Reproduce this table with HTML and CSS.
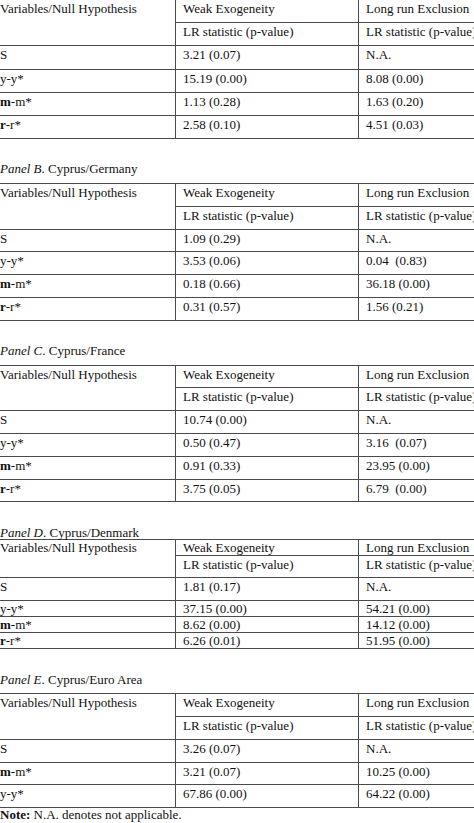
FILE: index.html
```html
<!DOCTYPE html>
<html>
<head>
<meta charset="utf-8">
<link rel="stylesheet" href="styles.css">
</head>
<body>
<div class="page">
  <div class="sheet">
    <table class="tbl tbl-a">
      <colgroup><col class="c"><col class="c"><col class="c"></colgroup>
      <tr><td rowspan="2">Variables/Null Hypothesis</td><td>Weak Exogeneity</td><td>Long run Exclusion</td></tr>
      <tr><td>LR statistic (p-value)</td><td>LR statistic (p-value)</td></tr>
      <tr><td>S</td><td>3.21 (0.07)</td><td>N.A.</td></tr>
      <tr><td>y-y*</td><td>15.19 (0.00)</td><td>8.08 (0.00)</td></tr>
      <tr><td><b>m</b>-m*</td><td>1.13 (0.28)</td><td>1.63 (0.20)</td></tr>
      <tr><td><b>r</b>-r*</td><td>2.58 (0.10)</td><td>4.51 (0.03)</td></tr>
    </table>

    <div class="title"><i>Panel B</i>. Cyprus/Germany</div>
    <table class="tbl">
      <colgroup><col class="c"><col class="c"><col class="c"></colgroup>
      <tr><td rowspan="2">Variables/Null Hypothesis</td><td>Weak Exogeneity</td><td>Long run Exclusion</td></tr>
      <tr><td>LR statistic (p-value)</td><td>LR statistic (p-value)</td></tr>
      <tr><td>S</td><td>1.09 (0.29)</td><td>N.A.</td></tr>
      <tr><td>y-y*</td><td>3.53 (0.06)</td><td>0.04&nbsp; (0.83)</td></tr>
      <tr><td><b>m</b>-m*</td><td>0.18 (0.66)</td><td>36.18 (0.00)</td></tr>
      <tr><td><b>r</b>-r*</td><td>0.31 (0.57)</td><td>1.56 (0.21)</td></tr>
    </table>

    <div class="title"><i>Panel C</i>. Cyprus/France</div>
    <table class="tbl">
      <colgroup><col class="c"><col class="c"><col class="c"></colgroup>
      <tr><td rowspan="2">Variables/Null Hypothesis</td><td>Weak Exogeneity</td><td>Long run Exclusion</td></tr>
      <tr><td>LR statistic (p-value)</td><td>LR statistic (p-value)</td></tr>
      <tr><td>S</td><td>10.74 (0.00)</td><td>N.A.</td></tr>
      <tr><td>y-y*</td><td>0.50 (0.47)</td><td>3.16&nbsp; (0.07)</td></tr>
      <tr><td><b>m</b>-m*</td><td>0.91 (0.33)</td><td>23.95 (0.00)</td></tr>
      <tr><td><b>r</b>-r*</td><td>3.75 (0.05)</td><td>6.79&nbsp; (0.00)</td></tr>
    </table>

    <div class="title title-tight"><i>Panel D</i>. Cyprus/Denmark</div>
    <table class="tbl">
      <colgroup><col class="c"><col class="c"><col class="c"></colgroup>
      <tr class="compact"><td rowspan="2">Variables/Null Hypothesis</td><td>Weak Exogeneity</td><td>Long run Exclusion</td></tr>
      <tr><td>LR statistic (p-value)</td><td>LR statistic (p-value)</td></tr>
      <tr><td>S</td><td>1.81 (0.17)</td><td>N.A.</td></tr>
      <tr class="compact"><td>y-y*</td><td>37.15 (0.00)</td><td>54.21 (0.00)</td></tr>
      <tr class="compact"><td><b>m</b>-m*</td><td>8.62 (0.00)</td><td>14.12 (0.00)</td></tr>
      <tr class="compact"><td><b>r</b>-r*</td><td>6.26 (0.01)</td><td>51.95 (0.00)</td></tr>
    </table>

    <div class="title"><i>Panel E</i>. Cyprus/Euro Area</div>
    <table class="tbl">
      <colgroup><col class="c"><col class="c"><col class="c"></colgroup>
      <tr><td rowspan="2">Variables/Null Hypothesis</td><td>Weak Exogeneity</td><td>Long run Exclusion</td></tr>
      <tr><td>LR statistic (p-value)</td><td>LR statistic (p-value)</td></tr>
      <tr><td>S</td><td>3.26 (0.07)</td><td>N.A.</td></tr>
      <tr><td><b>m</b>-m*</td><td>3.21 (0.07)</td><td>10.25 (0.00)</td></tr>
      <tr><td>y-y*</td><td>67.86 (0.00)</td><td>64.22 (0.00)</td></tr>
    </table>
    <div class="note"><b>Note:</b> N.A. denotes not applicable.</div>
  </div>
</div>
</body>
</html>
```

FILE: styles.css
```css
html, body {
  margin: 0;
  padding: 0;
  background: #ffffff;
}

body {
  font-family: "Liberation Serif", "Times New Roman", serif;
  font-size: 13px;
  color: #111111;
}

.page {
  width: 474px;
  height: 823px;
  overflow: hidden;
}

.sheet {
  margin-left: -8px;
  width: 560px;
}

.tbl {
  border-collapse: collapse;
  table-layout: fixed;
  width: 549px;
}

.tbl .c {
  width: 183px;
}

.tbl td {
  border: 1px solid #4a4a4a;
  padding: 1px 7px 5.8px 7px;
  line-height: 15px;
  vertical-align: top;
  white-space: nowrap;
  text-align: left;
}

.tbl-a {
  margin-top: -1px;
}

.tbl-a td {
  padding-bottom: 6.2px;
}

.tbl .compact td {
  padding: 1px 7px 0 7px;
  line-height: 14px;
}

.title {
  margin: 22.3px 0 6.6px 0;
  padding-left: 8px;
  line-height: 15px;
}

.title-tight {
  margin-bottom: -1.1px;
}

.note {
  margin-top: -1.5px;
  padding-left: 8px;
  line-height: 15px;
}
```
